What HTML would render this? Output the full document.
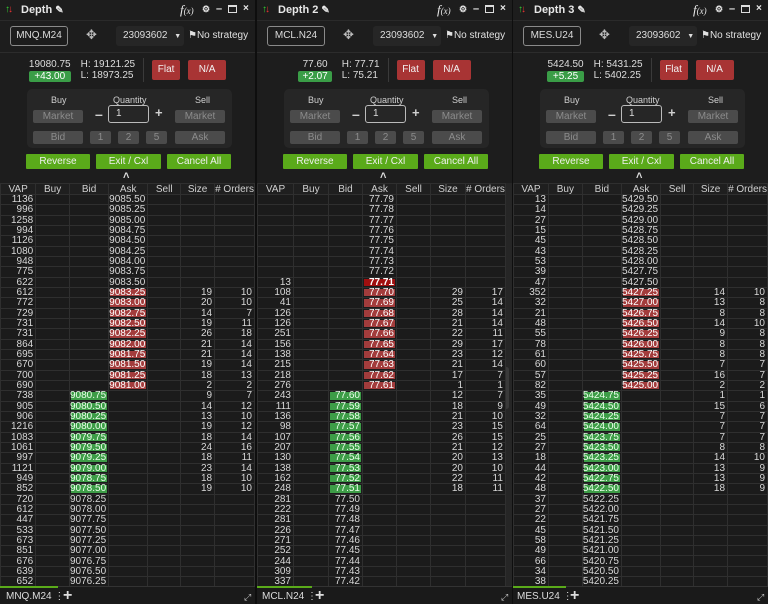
<!DOCTYPE html><html><head><meta charset="utf-8"><style>
*{box-sizing:border-box;margin:0;padding:0}
body{width:768px;height:604px;background:#0e0e0e;font-family:"Liberation Sans",sans-serif;color:#ddd;overflow:hidden;position:relative}
.p{position:absolute;top:0;width:255px;height:604px;background:#1d1d1d;overflow:hidden}
.a{position:absolute}
.tt{top:0;left:0;right:0;height:20px;font-size:11px;font-weight:bold;color:#e8e8e8}
.sym{left:10px;top:26px;width:58px;height:20px;border:1px solid #8a8a8a;border-radius:3px;font-size:10px;line-height:18px;text-align:center;color:#ddd}
.acc{left:116px;top:26px;width:68px;height:20px;background:#262626;border-radius:3px;font-size:10px;line-height:20px;padding-left:7px}
.ns{left:188px;top:26px;font-size:10px;line-height:20px;color:#e0e0e0}
.info{left:0;right:0;top:57px;height:26px;display:flex;justify-content:center;align-items:center;font-size:10px}
.btn{border-radius:2px;text-align:center;color:#f2f2f2;font-size:10px}
.box{left:27px;top:89px;width:205px;height:59px;background:#262626;border-radius:5px}
.g{background:#4b4b4b;color:#8c8c8c;font-size:10px;text-align:center;border-radius:2px;position:absolute;height:13px;line-height:13px}
.lab{position:absolute;font-size:9px;color:#d0d0d0}
.gb{position:absolute;top:154px;height:15px;line-height:15px;background:#5aaa1a;color:#eef;font-size:10px;text-align:center;border-radius:1px;color:#f0f0f0}
table{position:absolute;left:0;top:183px;border-collapse:collapse;table-layout:fixed;font-size:10px;color:#d8d8d8}
td,th{border:1px solid #2f2f2f;height:10.33px;padding:0 2px 0 0;text-align:right;line-height:9px;overflow:hidden;white-space:nowrap}
th{font-weight:normal;text-align:center;background:#1f1f1f;height:11px;padding:0;color:#d0d0d0}
td{background:#1b1b1b}
td.r{background:#a33c3c;color:#fff;box-shadow:inset 0 0 0 1px #1b1b1b}
td.rr{background:#a00f0f;color:#fff;font-weight:bold;box-shadow:inset 0 0 0 1px #1b1b1b}
td.gr{background:#3d9d47;color:#eaffea;box-shadow:inset 0 0 0 1px #1b1b1b}
.sb{left:243px;top:183px;width:12px;height:403px;background:#262626}
.th{left:247px;width:5px;height:28px;background:#3a3a3a;border-radius:3px}
.tab{top:586px;left:0;right:0;height:18px;background:#1a1a1a;border-top:1px solid #333}
</style></head><body>

<!-- PANEL TEMPLATE 1 -->
<div class="p" style="left:0">
<div class="a tt"><span class="a" style="left:5px;top:4px;font-size:10px"><span style="color:#3c3">&#8593;</span><span style="color:#e33;margin-left:-2px">&#8595;</span></span><span class="a" style="left:21px;top:4px">Depth <span style="font-size:10px">&#9998;</span></span><span class="a" style="left:180px;top:2px;font-family:'Liberation Serif',serif;font-style:italic;font-weight:normal;font-size:13px">f<span style="font-size:9px">(x)</span></span><span class="a" style="left:202px;top:4px;font-size:9px">&#9881;</span><span class="a" style="left:216px;top:3px">&#8211;</span><span class="a" style="left:228px;top:5px;width:9px;height:8px;border:1.5px solid #ddd;border-top-width:2.5px"></span><span class="a" style="left:243px;top:3px;font-size:10px">&#215;</span></div>
<div class="a" style="left:0;right:0;top:20px;height:1px;background:#2a2a2a"></div>
<div class="a sym">MNQ.M24</div>
<div class="a" style="left:86px;top:27px;font-size:13px;color:#bbb">&#10021;</div>
<div class="a acc">23093602 <span style="font-size:7px;margin-left:4px">&#9660;</span></div>
<div class="a ns">&#9873;No strategy</div>
<div class="a" style="left:0;right:0;top:52px;height:1px;background:#2c2c2c"></div>
<div class="a info"><div style="text-align:center;margin-right:10px"><div>19080.75</div><div style="background:#3a9d47;color:#fff;border-radius:2px;padding:0 4px;margin-top:1px">+43.00</div></div><div style="line-height:11px;margin-right:8px"><div>H: 19121.25</div><div>L: 18973.25</div></div><div style="width:1px;height:24px;background:#3a3a3a;margin-right:8px"></div><div class="btn" style="background:#a83434;width:28px;height:20px;line-height:20px;margin-right:8px">Flat</div><div class="btn" style="background:#a83434;width:38px;height:20px;line-height:20px">N/A</div></div>
<div class="a box"><span class="lab" style="left:24px;top:6px">Buy</span><span class="lab" style="left:86px;top:6px">Quantity</span><span class="lab" style="left:168px;top:6px">Sell</span>
<div class="g" style="left:6px;top:21px;width:50px">Market</div><span class="lab" style="left:68px;top:17px;font-size:14px;font-weight:bold">&#8211;</span><div class="a" style="left:81px;top:16px;width:41px;height:18px;border:1px solid #bbb;border-radius:3px;font-size:10px;line-height:16px;padding-left:7px">1</div><span class="lab" style="left:128px;top:16px;font-size:13px;font-weight:bold">+</span><div class="g" style="left:148px;top:21px;width:50px">Market</div>
<div class="g" style="left:6px;top:42px;width:50px">Bid</div><div class="g" style="left:63px;top:42px;width:21px">1</div><div class="g" style="left:91px;top:42px;width:21px">2</div><div class="g" style="left:119px;top:42px;width:21px">5</div><div class="g" style="left:148px;top:42px;width:50px">Ask</div></div>
<div class="gb" style="left:26px;width:64px">Reverse</div><div class="gb" style="left:96px;width:65px">Exit / Cxl</div><div class="gb" style="left:167px;width:64px">Cancel All</div>
<div class="a" style="left:123px;top:170px;font-size:11px;color:#ddd;font-weight:bold">&#708;</div>
<div class="a sb"></div><div class="a th" style="top:370px"></div>
<table><colgroup><col style="width:36px"><col style="width:35px"><col style="width:34px"><col style="width:34px"><col style="width:34px"><col style="width:35px"><col style="width:35px"></colgroup>
<tr><th>VAP<th>Buy<th>Bid<th>Ask<th>Sell<th>Size<th># Orders
<tr><td>1136<td><td><td>9085.50<td><td><td>
<tr><td>996<td><td><td>9085.25<td><td><td>
<tr><td>1258<td><td><td>9085.00<td><td><td>
<tr><td>994<td><td><td>9084.75<td><td><td>
<tr><td>1126<td><td><td>9084.50<td><td><td>
<tr><td>1080<td><td><td>9084.25<td><td><td>
<tr><td>948<td><td><td>9084.00<td><td><td>
<tr><td>775<td><td><td>9083.75<td><td><td>
<tr><td>622<td><td><td>9083.50<td><td><td>
<tr><td>612<td><td><td class=r>9083.25<td><td>19<td>10
<tr><td>772<td><td><td class=r>9083.00<td><td>20<td>10
<tr><td>729<td><td><td class=r>9082.75<td><td>14<td>7
<tr><td>731<td><td><td class=r>9082.50<td><td>19<td>11
<tr><td>731<td><td><td class=r>9082.25<td><td>26<td>18
<tr><td>864<td><td><td class=r>9082.00<td><td>21<td>14
<tr><td>695<td><td><td class=r>9081.75<td><td>21<td>14
<tr><td>670<td><td><td class=r>9081.50<td><td>19<td>14
<tr><td>700<td><td><td class=r>9081.25<td><td>18<td>13
<tr><td>690<td><td><td class=r>9081.00<td><td>2<td>2
<tr><td>738<td><td class=gr>9080.75<td><td><td>9<td>7
<tr><td>905<td><td class=gr>9080.50<td><td><td>14<td>12
<tr><td>906<td><td class=gr>9080.25<td><td><td>13<td>10
<tr><td>1216<td><td class=gr>9080.00<td><td><td>19<td>12
<tr><td>1083<td><td class=gr>9079.75<td><td><td>18<td>14
<tr><td>1061<td><td class=gr>9079.50<td><td><td>24<td>16
<tr><td>997<td><td class=gr>9079.25<td><td><td>18<td>11
<tr><td>1121<td><td class=gr>9079.00<td><td><td>23<td>14
<tr><td>949<td><td class=gr>9078.75<td><td><td>18<td>10
<tr><td>852<td><td class=gr>9078.50<td><td><td>19<td>10
<tr><td>720<td><td>9078.25<td><td><td><td>
<tr><td>612<td><td>9078.00<td><td><td><td>
<tr><td>447<td><td>9077.75<td><td><td><td>
<tr><td>533<td><td>9077.50<td><td><td><td>
<tr><td>673<td><td>9077.25<td><td><td><td>
<tr><td>851<td><td>9077.00<td><td><td><td>
<tr><td>676<td><td>9076.75<td><td><td><td>
<tr><td>639<td><td>9076.50<td><td><td><td>
<tr><td>652<td><td>9076.25<td><td><td><td>
</table>
<div class="a tab"><div class="a" style="left:0;top:-1px;width:58px;height:2px;background:#5aaa1a"></div><span class="a" style="left:6px;top:4px;font-size:10px">MNQ.M24 &#8942;</span><span class="a" style="left:63px;top:0px;font-size:16px;font-weight:bold">+</span><span class="a" style="left:244px;top:5px;font-size:9px;color:#ccc">&#10530;</span></div>
</div>

<!-- PANEL 2 -->
<div class="p" style="left:257px">
<div class="a tt"><span class="a" style="left:5px;top:4px;font-size:10px"><span style="color:#3c3">&#8593;</span><span style="color:#e33;margin-left:-2px">&#8595;</span></span><span class="a" style="left:21px;top:4px">Depth 2 <span style="font-size:10px">&#9998;</span></span><span class="a" style="left:180px;top:2px;font-family:'Liberation Serif',serif;font-style:italic;font-weight:normal;font-size:13px">f<span style="font-size:9px">(x)</span></span><span class="a" style="left:202px;top:4px;font-size:9px">&#9881;</span><span class="a" style="left:216px;top:3px">&#8211;</span><span class="a" style="left:228px;top:5px;width:9px;height:8px;border:1.5px solid #ddd;border-top-width:2.5px"></span><span class="a" style="left:243px;top:3px;font-size:10px">&#215;</span></div>
<div class="a" style="left:0;right:0;top:20px;height:1px;background:#2a2a2a"></div>
<div class="a sym">MCL.N24</div>
<div class="a" style="left:86px;top:27px;font-size:13px;color:#bbb">&#10021;</div>
<div class="a acc">23093602 <span style="font-size:7px;margin-left:4px">&#9660;</span></div>
<div class="a ns">&#9873;No strategy</div>
<div class="a" style="left:0;right:0;top:52px;height:1px;background:#2c2c2c"></div>
<div class="a info"><div style="text-align:center;margin-right:10px"><div>77.60</div><div style="background:#3a9d47;color:#fff;border-radius:2px;padding:0 4px;margin-top:1px">+2.07</div></div><div style="line-height:11px;margin-right:8px"><div>H: 77.71</div><div>L: 75.21</div></div><div style="width:1px;height:24px;background:#3a3a3a;margin-right:8px"></div><div class="btn" style="background:#a83434;width:28px;height:20px;line-height:20px;margin-right:8px">Flat</div><div class="btn" style="background:#a83434;width:38px;height:20px;line-height:20px">N/A</div></div>
<div class="a box"><span class="lab" style="left:24px;top:6px">Buy</span><span class="lab" style="left:86px;top:6px">Quantity</span><span class="lab" style="left:168px;top:6px">Sell</span>
<div class="g" style="left:6px;top:21px;width:50px">Market</div><span class="lab" style="left:68px;top:17px;font-size:14px;font-weight:bold">&#8211;</span><div class="a" style="left:81px;top:16px;width:41px;height:18px;border:1px solid #bbb;border-radius:3px;font-size:10px;line-height:16px;padding-left:7px">1</div><span class="lab" style="left:128px;top:16px;font-size:13px;font-weight:bold">+</span><div class="g" style="left:148px;top:21px;width:50px">Market</div>
<div class="g" style="left:6px;top:42px;width:50px">Bid</div><div class="g" style="left:63px;top:42px;width:21px">1</div><div class="g" style="left:91px;top:42px;width:21px">2</div><div class="g" style="left:119px;top:42px;width:21px">5</div><div class="g" style="left:148px;top:42px;width:50px">Ask</div></div>
<div class="gb" style="left:26px;width:64px">Reverse</div><div class="gb" style="left:96px;width:65px">Exit / Cxl</div><div class="gb" style="left:167px;width:64px">Cancel All</div>
<div class="a" style="left:123px;top:170px;font-size:11px;color:#ddd;font-weight:bold">&#708;</div>
<div class="a sb"></div><div class="a th" style="top:367px;height:42px"></div>
<table><colgroup><col style="width:36px"><col style="width:35px"><col style="width:34px"><col style="width:34px"><col style="width:34px"><col style="width:35px"><col style="width:35px"></colgroup>
<tr><th>VAP<th>Buy<th>Bid<th>Ask<th>Sell<th>Size<th># Orders
<tr><td><td><td><td>77.79<td><td><td>
<tr><td><td><td><td>77.78<td><td><td>
<tr><td><td><td><td>77.77<td><td><td>
<tr><td><td><td><td>77.76<td><td><td>
<tr><td><td><td><td>77.75<td><td><td>
<tr><td><td><td><td>77.74<td><td><td>
<tr><td><td><td><td>77.73<td><td><td>
<tr><td><td><td><td>77.72<td><td><td>
<tr><td>13<td><td><td class=rr>77.71<td><td><td>
<tr><td>108<td><td><td class=r>77.70<td><td>29<td>17
<tr><td>41<td><td><td class=r>77.69<td><td>25<td>14
<tr><td>126<td><td><td class=r>77.68<td><td>28<td>14
<tr><td>126<td><td><td class=r>77.67<td><td>21<td>14
<tr><td>251<td><td><td class=r>77.66<td><td>22<td>11
<tr><td>156<td><td><td class=r>77.65<td><td>29<td>17
<tr><td>138<td><td><td class=r>77.64<td><td>23<td>12
<tr><td>215<td><td><td class=r>77.63<td><td>21<td>14
<tr><td>218<td><td><td class=r>77.62<td><td>17<td>7
<tr><td>276<td><td><td class=r>77.61<td><td>1<td>1
<tr><td>243<td><td class=gr>77.60<td><td><td>12<td>7
<tr><td>111<td><td class=gr>77.59<td><td><td>18<td>9
<tr><td>136<td><td class=gr>77.58<td><td><td>21<td>10
<tr><td>98<td><td class=gr>77.57<td><td><td>23<td>15
<tr><td>107<td><td class=gr>77.56<td><td><td>26<td>15
<tr><td>207<td><td class=gr>77.55<td><td><td>21<td>12
<tr><td>130<td><td class=gr>77.54<td><td><td>20<td>13
<tr><td>138<td><td class=gr>77.53<td><td><td>20<td>10
<tr><td>162<td><td class=gr>77.52<td><td><td>22<td>11
<tr><td>248<td><td class=gr>77.51<td><td><td>18<td>11
<tr><td>281<td><td>77.50<td><td><td><td>
<tr><td>222<td><td>77.49<td><td><td><td>
<tr><td>281<td><td>77.48<td><td><td><td>
<tr><td>226<td><td>77.47<td><td><td><td>
<tr><td>271<td><td>77.46<td><td><td><td>
<tr><td>252<td><td>77.45<td><td><td><td>
<tr><td>244<td><td>77.44<td><td><td><td>
<tr><td>309<td><td>77.43<td><td><td><td>
<tr><td>337<td><td>77.42<td><td><td><td>
</table>
<div class="a tab"><div class="a" style="left:0;top:-1px;width:55px;height:2px;background:#5aaa1a"></div><span class="a" style="left:5px;top:4px;font-size:10px">MCL.N24 &#8942;</span><span class="a" style="left:58px;top:0px;font-size:16px;font-weight:bold">+</span><span class="a" style="left:244px;top:5px;font-size:9px;color:#ccc">&#10530;</span></div>
</div>

<!-- PANEL 3 -->
<div class="p" style="left:513px">
<div class="a tt"><span class="a" style="left:5px;top:4px;font-size:10px"><span style="color:#3c3">&#8593;</span><span style="color:#e33;margin-left:-2px">&#8595;</span></span><span class="a" style="left:21px;top:4px">Depth 3 <span style="font-size:10px">&#9998;</span></span><span class="a" style="left:180px;top:2px;font-family:'Liberation Serif',serif;font-style:italic;font-weight:normal;font-size:13px">f<span style="font-size:9px">(x)</span></span><span class="a" style="left:202px;top:4px;font-size:9px">&#9881;</span><span class="a" style="left:216px;top:3px">&#8211;</span><span class="a" style="left:228px;top:5px;width:9px;height:8px;border:1.5px solid #ddd;border-top-width:2.5px"></span><span class="a" style="left:243px;top:3px;font-size:10px">&#215;</span></div>
<div class="a" style="left:0;right:0;top:20px;height:1px;background:#2a2a2a"></div>
<div class="a sym">MES.U24</div>
<div class="a" style="left:86px;top:27px;font-size:13px;color:#bbb">&#10021;</div>
<div class="a acc">23093602 <span style="font-size:7px;margin-left:4px">&#9660;</span></div>
<div class="a ns">&#9873;No strategy</div>
<div class="a" style="left:0;right:0;top:52px;height:1px;background:#2c2c2c"></div>
<div class="a info"><div style="text-align:center;margin-right:10px"><div>5424.50</div><div style="background:#3a9d47;color:#fff;border-radius:2px;padding:0 4px;margin-top:1px">+5.25</div></div><div style="line-height:11px;margin-right:8px"><div>H: 5431.25</div><div>L: 5402.25</div></div><div style="width:1px;height:24px;background:#3a3a3a;margin-right:8px"></div><div class="btn" style="background:#a83434;width:28px;height:20px;line-height:20px;margin-right:8px">Flat</div><div class="btn" style="background:#a83434;width:38px;height:20px;line-height:20px">N/A</div></div>
<div class="a box"><span class="lab" style="left:24px;top:6px">Buy</span><span class="lab" style="left:86px;top:6px">Quantity</span><span class="lab" style="left:168px;top:6px">Sell</span>
<div class="g" style="left:6px;top:21px;width:50px">Market</div><span class="lab" style="left:68px;top:17px;font-size:14px;font-weight:bold">&#8211;</span><div class="a" style="left:81px;top:16px;width:41px;height:18px;border:1px solid #bbb;border-radius:3px;font-size:10px;line-height:16px;padding-left:7px">1</div><span class="lab" style="left:128px;top:16px;font-size:13px;font-weight:bold">+</span><div class="g" style="left:148px;top:21px;width:50px">Market</div>
<div class="g" style="left:6px;top:42px;width:50px">Bid</div><div class="g" style="left:63px;top:42px;width:21px">1</div><div class="g" style="left:91px;top:42px;width:21px">2</div><div class="g" style="left:119px;top:42px;width:21px">5</div><div class="g" style="left:148px;top:42px;width:50px">Ask</div></div>
<div class="gb" style="left:26px;width:64px">Reverse</div><div class="gb" style="left:96px;width:65px">Exit / Cxl</div><div class="gb" style="left:167px;width:64px">Cancel All</div>
<div class="a" style="left:123px;top:170px;font-size:11px;color:#ddd;font-weight:bold">&#708;</div>
<div class="a sb"></div><div class="a th" style="top:367px;height:42px"></div>
<table><colgroup><col style="width:36px"><col style="width:35px"><col style="width:34px"><col style="width:34px"><col style="width:34px"><col style="width:35px"><col style="width:35px"></colgroup>
<tr><th>VAP<th>Buy<th>Bid<th>Ask<th>Sell<th>Size<th># Orders
<tr><td>13<td><td><td>5429.50<td><td><td>
<tr><td>14<td><td><td>5429.25<td><td><td>
<tr><td>27<td><td><td>5429.00<td><td><td>
<tr><td>15<td><td><td>5428.75<td><td><td>
<tr><td>45<td><td><td>5428.50<td><td><td>
<tr><td>43<td><td><td>5428.25<td><td><td>
<tr><td>53<td><td><td>5428.00<td><td><td>
<tr><td>39<td><td><td>5427.75<td><td><td>
<tr><td>47<td><td><td>5427.50<td><td><td>
<tr><td>352<td><td><td class=r>5427.25<td><td>14<td>10
<tr><td>32<td><td><td class=r>5427.00<td><td>13<td>8
<tr><td>21<td><td><td class=r>5426.75<td><td>8<td>8
<tr><td>48<td><td><td class=r>5426.50<td><td>14<td>10
<tr><td>55<td><td><td class=r>5426.25<td><td>9<td>8
<tr><td>78<td><td><td class=r>5426.00<td><td>8<td>8
<tr><td>61<td><td><td class=r>5425.75<td><td>8<td>8
<tr><td>60<td><td><td class=r>5425.50<td><td>7<td>7
<tr><td>57<td><td><td class=r>5425.25<td><td>16<td>7
<tr><td>82<td><td><td class=r>5425.00<td><td>2<td>2
<tr><td>35<td><td class=gr>5424.75<td><td><td>1<td>1
<tr><td>49<td><td class=gr>5424.50<td><td><td>15<td>6
<tr><td>32<td><td class=gr>5424.25<td><td><td>7<td>7
<tr><td>64<td><td class=gr>5424.00<td><td><td>7<td>7
<tr><td>25<td><td class=gr>5423.75<td><td><td>7<td>7
<tr><td>27<td><td class=gr>5423.50<td><td><td>8<td>8
<tr><td>18<td><td class=gr>5423.25<td><td><td>14<td>10
<tr><td>44<td><td class=gr>5423.00<td><td><td>13<td>9
<tr><td>42<td><td class=gr>5422.75<td><td><td>13<td>9
<tr><td>48<td><td class=gr>5422.50<td><td><td>18<td>9
<tr><td>37<td><td>5422.25<td><td><td><td>
<tr><td>27<td><td>5422.00<td><td><td><td>
<tr><td>22<td><td>5421.75<td><td><td><td>
<tr><td>45<td><td>5421.50<td><td><td><td>
<tr><td>58<td><td>5421.25<td><td><td><td>
<tr><td>49<td><td>5421.00<td><td><td><td>
<tr><td>66<td><td>5420.75<td><td><td><td>
<tr><td>34<td><td>5420.50<td><td><td><td>
<tr><td>38<td><td>5420.25<td><td><td><td>
</table>
<div class="a tab"><div class="a" style="left:0;top:-1px;width:53px;height:2px;background:#5aaa1a"></div><span class="a" style="left:4px;top:4px;font-size:10px">MES.U24 &#8942;</span><span class="a" style="left:57px;top:0px;font-size:16px;font-weight:bold">+</span><span class="a" style="left:244px;top:5px;font-size:9px;color:#ccc">&#10530;</span></div>
</div>
</body></html>
